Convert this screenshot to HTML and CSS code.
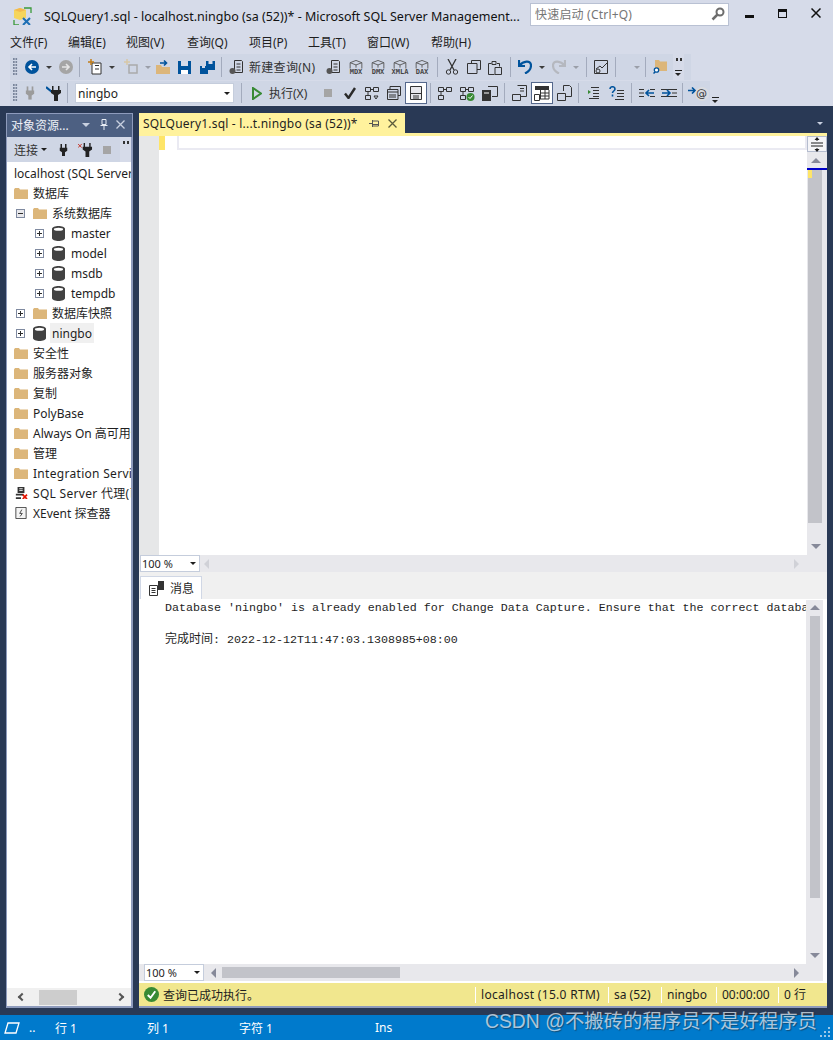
FILE: index.html
```html
<!DOCTYPE html>
<html lang="zh">
<head>
<meta charset="utf-8">
<title>SQLQuery1.sql - SSMS</title>
<link rel="stylesheet" href="styles.css">
</head>
<body>
<svg class="defs" width="0" height="0">
  <symbol id="folder" viewBox="0 0 14 12"><path d="M0 2.500 1 1h4l1 1.500h8V12H0z" fill="#dcb67a"/></symbol>
  <symbol id="db" viewBox="0 0 13 15"><path d="M0 3c0-4 13-4 13 0v9c0 4-13 4-13 0z" fill="#424242"/><ellipse cx="6.500" cy="3.200" rx="4.600" ry="1.500" fill="#fff"/></symbol>
  <symbol id="plus" viewBox="0 0 9 9"><rect x=".5" y=".5" width="8" height="8" fill="#fff" stroke="#7f8aa0"/><path d="M2 4.500h5M4.500 2v5" stroke="#2c2c2c"/></symbol>
  <symbol id="minus" viewBox="0 0 9 9"><rect x=".5" y=".5" width="8" height="8" fill="#e8e8ec" stroke="#7f8aa0"/><path d="M2 4.500h5" stroke="#2c2c2c"/></symbol>
  <symbol id="doc" viewBox="0 0 16 16"><path d="M5.500 1.500h7l1 1v11h-8zM7.500 5h4M7.500 8h4M7.500 11h4" fill="none" stroke="#333"/><ellipse cx="3.500" cy="12" rx="3" ry="3" fill="#555"/></symbol>
  <symbol id="cube" viewBox="0 0 18 10"><path d="M9 .5 15.500 3v6.500M9 .5 2.500 3v6.500M2.500 3 9 5.500 15.500 3M9 5.500v3" fill="none" stroke="#555"/></symbol>
  <symbol id="grid" viewBox="0 0 16 16"><path d="M1.500 2.500h5v4h-5zM9.500 2.500h5v4h-5zM1.500 10.500h5v4h-5zM4 6.500v4M6.500 4.500h3" fill="none" stroke="#333"/></symbol>
  <symbol id="plug" viewBox="0 0 12 16"><path d="M2 0h2v5H2zM8 0h2v5H8zM1 5h10v4l-3 2v5H4v-5L1 9z" fill="currentColor"/></symbol>
</svg>

<div class="app">
  <header class="titlebar">
    <svg class="logo" viewBox="0 0 22 22" width="22" height="22">
      <path d="M2 7l6-2 6 2v8l-6 2-6-2z" fill="#f6d55c"/><path d="M2 7l6-2 6 2-6 2z" fill="#f3b94d"/>
      <path d="M2 17v5h5M12 5h7v5" fill="none" stroke="#3a9a3a" stroke-width="1.300"/>
      <path d="M11 15l7 7M18 15l-7 7" stroke="#1e6fb5" stroke-width="2"/>
    </svg>
    <div class="title">SQLQuery1.sql - localhost.ningbo (sa (52))* - Microsoft SQL Server Management...</div>
    <div class="search">
      <span>快速启动 (Ctrl+Q)</span>
      <svg viewBox="0 0 14 14" width="14" height="14"><circle cx="9" cy="5" r="3.500" fill="none" stroke="#6d6d6d" stroke-width="2"/><path d="M6.500 7.500 1.500 12.500" stroke="#6d6d6d" stroke-width="2.500"/></svg>
    </div>
    <div class="winbtns">
      <i class="w-min"></i><i class="w-max"></i>
      <svg viewBox="0 0 10 10" width="10" height="10"><path d="M.5.500l9 9M9.500.500l-9 9" stroke="#111" stroke-width="1.500"/></svg>
    </div>
  </header>

  <nav class="menu">
    <span>文件(F)</span><span>编辑(E)</span><span>视图(V)</span><span>查询(Q)</span><span>项目(P)</span><span>工具(T)</span><span>窗口(W)</span><span>帮助(H)</span>
  </nav>

  <div class="toolbar tb1">
    <i class="grip"></i>
    <b class="tbi w20 first"><svg viewBox="0 0 14 14" width="14" height="14"><circle cx="7" cy="7" r="7" fill="#00539c"/><path d="M11 7H4M7 4 4 7l3 3" fill="none" stroke="#fff" stroke-width="1.600"/></svg></b>
    <i class="arr"></i>
    <b class="tbi w20 off"><svg viewBox="0 0 14 14" width="14" height="14"><circle cx="7" cy="7" r="7" fill="#a5a5a5"/><path d="M3 7h7M7 4l3 3-3 3" fill="none" stroke="#e5e5e5" stroke-width="1.600"/></svg></b>
    <i class="sep r5"></i>
    <b class="tbi w20"><svg viewBox="0 0 16 16" width="16" height="16"><path d="M5 4h9v11H5z" fill="#fff" stroke="#333"/><path d="M8 6.500h4M8 10h4" stroke="#333"/><path d="M4 0v6M1 3h6" stroke="#c27d1a" stroke-width="1.500"/></svg></b>
    <i class="arr mr6"></i>
    <b class="tbi w20 off"><svg viewBox="0 0 16 16" width="16" height="16"><path d="M6 6h8v8H6z" fill="none" stroke="#aaa" stroke-width="1.500"/><path d="M4 0v6M1 3h6" stroke="#d8c7a6" stroke-width="1.500"/></svg></b>
    <i class="arr off mr2"></i>
    <b class="tbi w20"><svg viewBox="0 0 16 16" width="16" height="16"><path d="M1 6h5l1 2h8v7H1z" fill="#dcb67a"/><path d="M5 4h6M9 1.500 11.500 4 9 6.500" fill="none" stroke="#00539c" stroke-width="1.600"/></svg></b>
    <b class="tbi w22"><svg viewBox="0 0 13 13" width="13" height="13"><path d="M0 0h13v13H0z" fill="#00539c"/><path d="M3 0h7v5H3z" fill="#d6dbe9"/><path d="M3 9h7v4H3z" fill="#fff"/></svg></b>
    <b class="tbi w22 ml1"><svg viewBox="0 0 15 13" width="15" height="13"><path d="M0 5h8v8H0zM6 0h9v9H6z" fill="#00539c"/><path d="M8.500 0h4v3h-4zM2 5h3v2H2z" fill="#d6dbe9"/></svg></b>
    <i class="sep r5"></i>
    <b class="tbi w20"><svg width="16" height="16"><use href="#doc"/></svg></b>
    <span class="tbtext nq">新建查询(N)</span>
    <b class="tbi w22"><svg width="16" height="16"><use href="#doc"/></svg></b>
    <b class="tbi w22 cube"><svg width="18" height="10"><use href="#cube"/></svg><em>MDX</em></b>
    <b class="tbi w22 cube"><svg width="18" height="10"><use href="#cube"/></svg><em>DMX</em></b>
    <b class="tbi w22 cube"><svg width="18" height="10"><use href="#cube"/></svg><em>XMLA</em></b>
    <b class="tbi w22 cube"><svg width="18" height="10"><use href="#cube"/></svg><em>DAX</em></b>
    <i class="sep l4"></i>
    <b class="tbi w22"><svg viewBox="0 0 14 16" width="14" height="16"><path d="M3 0l6 11M11 0 5 11" stroke="#333" stroke-width="1.300"/><circle cx="3.500" cy="13" r="2.200" fill="none" stroke="#333"/><circle cx="10.500" cy="13" r="2.200" fill="none" stroke="#333"/></svg></b>
    <b class="tbi w21"><svg viewBox="0 0 14 14" width="14" height="14"><path d="M4.500 3V.5h9v9H10M.500 3.500h9.500v10H.500z" fill="none" stroke="#333"/></svg></b>
    <b class="tbi w21"><svg viewBox="0 0 14 15" width="14" height="15"><path d="M.500 3.500h3M9 3.500h2.500v3M.500 3.500v11h6M7 7.500h6.500v7H7z" fill="none" stroke="#333"/><path d="M4 1.500h4v3H4z" fill="none" stroke="#333"/></svg></b>
    <i class="sep l5 r4"></i>
    <b class="tbi w20"><svg viewBox="0 0 14 14" width="14" height="14"><path d="M1 0v6h6M1.500 5.500C5 1 13-.5 13 5.500c0 3-2 6-6 8" fill="none" stroke="#00539c" stroke-width="2.200"/></svg></b>
    <i class="arr"></i>
    <b class="tbi w20"><svg viewBox="0 0 14 14" width="14" height="14"><path d="M13 0v6H7M12.500 5.500C9 1 1-.5 1 5.500c0 3 2 6 6 8" fill="none" stroke="#b5b8bf" stroke-width="2.200"/></svg></b>
    <i class="arr off"></i>
    <i class="sep"></i>
    <b class="tbi w22"><svg viewBox="0 0 14 14" width="14" height="14"><path d="M.500.500h13v13H.500zM2 9l4-3 2 2 5-5" fill="none" stroke="#333"/><circle cx="4" cy="11" r="2" fill="none" stroke="#333"/></svg></b>
    <i class="sep"></i>
    <i class="arr off spaced"></i>
    <i class="sep"></i>
    <b class="tbi w22"><svg viewBox="0 0 14 14" width="14" height="14"><path d="M2 0h4l1 1.500h7V11H2z" fill="#dcb67a"/><circle cx="3.500" cy="10" r="2.200" fill="#fff" stroke="#00539c" stroke-width="1.300"/><path d="M2 12 .5 13.500" stroke="#00539c" stroke-width="1.500"/></svg></b>
    <span class="overflow"><i class="dots"></i><i class="ovarr"></i></span>
  </div>

  <div class="toolbar tb2">
    <i class="grip"></i>
    <b class="tbi w18 plugoff"><svg width="10" height="14" viewBox="0 0 12 16"><use href="#plug"/></svg></b>
    <b class="tbi w24 ml3 plugon"><svg viewBox="0 0 16 15" width="16" height="15"><path d="M0 1l6 5" stroke="#00539c" stroke-width="2.200"/><path d="M6 0h1.500v4H6zM12 0h1.500v4H12zM5 4h10v3l-3 2v6H8V9L5 7z" fill="#222"/></svg></b>
    <i class="sep l1 r7"></i>
    <div class="combo"><span>ningbo</span><i class="arr dark"></i></div>
    <i class="sep l7 r5"></i>
    <b class="tbi w20"><svg viewBox="0 0 10 13" width="10" height="13"><path d="M1 1l8 5.500-8 5.500z" fill="none" stroke="#388a34" stroke-width="2"/></svg></b>
    <span class="tbtext run">执行(X)</span>
    <b class="tbi w22"><i class="stop"></i></b>
    <b class="tbi w22"><svg viewBox="0 0 12 12" width="12" height="12"><path d="M1 6.500 4.500 11 11 1" fill="none" stroke="#2a2a2a" stroke-width="2.400"/></svg></b>
    <b class="tbi w22"><svg viewBox="0 0 16 16" width="16" height="16"><use href="#grid"/><path d="M10 11h4l-2 3z" fill="none" stroke="#333"/></svg></b>
    <b class="tbi w21"><svg viewBox="0 0 14 14" width="14" height="14"><path d="M3 3V.5h10.500v9H11M.500 3.500h10.500v10H.500zM.500 6h10.500M2 9h7M2 11h7" fill="none" stroke="#333"/></svg></b>
    <b class="tbi w22 ml1 boxed"><svg viewBox="0 0 12 14" width="12" height="14"><path d="M.500.500h11v13H.500zM.500 7.500h11M3 10h6M3 12h6" fill="#e8e8ec" stroke="#333"/></svg></b>
    <i class="sep"></i>
    <b class="tbi w22"><svg width="16" height="16"><use href="#grid"/></svg></b>
    <b class="tbi w22"><svg width="16" height="16" viewBox="0 0 16 16"><use href="#grid"/><circle cx="11.500" cy="12" r="4" fill="#388a34"/><path d="M9.500 12l1.500 1.500 2.500-3" fill="none" stroke="#fff"/></svg></b>
    <b class="tbi w24"><svg viewBox="0 0 16 15" width="16" height="15"><path d="M0 4h9v11H0z" fill="#333"/><path d="M6 .5h9.500v10H10" fill="none" stroke="#333"/><path d="M2 7h5" stroke="#fff"/></svg></b>
    <i class="sep l2 r4"></i>
    <b class="tbi w22"><svg viewBox="0 0 16 16" width="16" height="16"><path d="M5.500.500h9v11H9M8 3.500h4M8 6h4" fill="none" stroke="#333"/><path d="M.500 9.500h8v6h-8z" fill="none" stroke="#333"/></svg></b>
    <b class="tbi w22 boxed"><svg viewBox="0 0 16 16" width="16" height="16"><path d="M1 1h14v4H1z" fill="#333"/><path d="M6.500 5v9M11 5v9M6.500 8H15M6.500 11H15M15 5v9H6" fill="none" stroke="#333"/><path d="M.500 9.500h5v6h-5z" fill="#fff" stroke="#333"/></svg></b>
    <b class="tbi w22 ml1"><svg viewBox="0 0 16 16" width="16" height="16"><path d="M6.500 6V.5h6l2 2v9H9" fill="none" stroke="#333"/><path d="M.500 8.500h8v7h-8z" fill="none" stroke="#333"/></svg></b>
    <i class="sep l2 r4"></i>
    <b class="tbi w22"><svg viewBox="0 0 12 12" width="12" height="12"><path d="M3 .5h8M5 3.500h6M5 6.500h6M5 9.500h6M1 11.500h10" stroke="#333"/><path d="M0 3l3 2-3 2z" fill="#388a34"/></svg></b>
    <b class="tbi w22"><svg viewBox="0 0 15 14" width="15" height="14"><path d="M1 3c0-3 5-3 5 0 0 2-2.500 2-2.500 4M3.500 8.500v2" fill="none" stroke="#00539c" stroke-width="1.600"/><path d="M8 4.500h7M8 7.500h7M8 10.500h7M6 13.500h9" stroke="#333"/></svg></b>
    <i class="sep l4 r4"></i>
    <b class="tbi w22"><svg viewBox="0 0 16 12" width="16" height="12"><path d="M0 2.500h5M0 6h5M0 9.500h5M11 2.500h5M11 9.500h5" stroke="#333"/><path d="M15 6H7M10 3 7 6l3 3" fill="none" stroke="#00539c" stroke-width="1.600"/></svg></b>
    <b class="tbi w22"><svg viewBox="0 0 16 12" width="16" height="12"><path d="M0 2.500h16M0 9.500h16M11 6h5" stroke="#333"/><path d="M1 6h8M6 3l3 3-3 3" fill="none" stroke="#00539c" stroke-width="1.600"/></svg></b>
    <i class="sep l2 r4"></i>
    <b class="tbi w22 mailic"><svg viewBox="0 0 8 7" width="8" height="7"><path d="M0 3.500h7M4 .5l3 3-3 3" fill="none" stroke="#00539c" stroke-width="1.600"/></svg><em>@</em></b>
    <span class="tb2end"><i class="ovarr"></i></span>
  </div>

  <div class="workspace">
    <aside class="explorer">
      <div class="exp-head">
        <span class="exp-title">对象资源...</span>
        <i class="arr light"></i>
        <svg viewBox="0 0 8 11" width="8" height="11"><path d="M2 .5h4v5H2zM.5 6.500h7M4 7v4" fill="none" stroke="#e8ecf4"/></svg>
        <svg viewBox="0 0 9 9" width="9" height="9"><path d="M.5.500l8 8M8.500.500l-8 8" stroke="#c8d0e0" stroke-width="1.300"/></svg>
      </div>
      <div class="exp-tools">
        <span class="conn">连接</span><i class="arr dark"></i>
        <svg class="p1" width="9" height="14" viewBox="0 0 12 16"><use href="#plug"/></svg>
        <svg class="p2" width="15" height="14" viewBox="0 0 16 15"><path d="M0 1l4 4M4 1 0 5" stroke="#c42b1c"/><path d="M6 0h1.500v4H6zM12 0h1.500v4H12zM5 4h10v3l-3 2v6H8V9L5 7z" fill="#222"/></svg>
        <i class="stop"></i>
        <span class="exp-over"><i class="dots"></i></span>
      </div>
      <div class="tree">
        <div class="node"><span>localhost (SQL Server 15.0.2000 - sa)</span></div>
        <div class="node lv0"><svg class="ic"><use href="#folder"/></svg><span>数据库</span></div>
        <div class="node lv1"><svg class="ex"><use href="#minus"/></svg><svg class="ic"><use href="#folder"/></svg><span>系统数据库</span></div>
        <div class="node lv2"><svg class="ex"><use href="#plus"/></svg><svg class="ic dbi"><use href="#db"/></svg><span>master</span></div>
        <div class="node lv2"><svg class="ex"><use href="#plus"/></svg><svg class="ic dbi"><use href="#db"/></svg><span>model</span></div>
        <div class="node lv2"><svg class="ex"><use href="#plus"/></svg><svg class="ic dbi"><use href="#db"/></svg><span>msdb</span></div>
        <div class="node lv2"><svg class="ex"><use href="#plus"/></svg><svg class="ic dbi"><use href="#db"/></svg><span>tempdb</span></div>
        <div class="node lv1"><svg class="ex"><use href="#plus"/></svg><svg class="ic"><use href="#folder"/></svg><span>数据库快照</span></div>
        <div class="node lv1"><svg class="ex"><use href="#plus"/></svg><svg class="ic dbi"><use href="#db"/></svg><span class="sel">ningbo</span></div>
        <div class="node lv0"><svg class="ic"><use href="#folder"/></svg><span>安全性</span></div>
        <div class="node lv0"><svg class="ic"><use href="#folder"/></svg><span>服务器对象</span></div>
        <div class="node lv0"><svg class="ic"><use href="#folder"/></svg><span>复制</span></div>
        <div class="node lv0"><svg class="ic"><use href="#folder"/></svg><span>PolyBase</span></div>
        <div class="node lv0"><svg class="ic"><use href="#folder"/></svg><span>Always On 高可用性</span></div>
        <div class="node lv0"><svg class="ic"><use href="#folder"/></svg><span>管理</span></div>
        <div class="node lv0 wide"><svg class="ic"><use href="#folder"/></svg><span>Integration Services 目录</span></div>
        <div class="node lv0 wide"><svg class="ic" viewBox="0 0 14 14"><path d="M3 0h8v7H3zM1 8h9v2H1zM1 12h6v2H1z" fill="#333"/><path d="M5 2h4M5 4h4" stroke="#fff"/><path d="M9 9l5 5M14 9l-5 5" stroke="#e51400" stroke-width="2"/></svg><span>SQL Server 代理(已禁用代理 XP)</span></div>
        <div class="node lv0"><svg class="ic" viewBox="0 0 13 14"><path d="M.500.500h12v13H.500z" fill="#f4f4f4" stroke="#333"/><path d="M7.500 3 5 7.500h3L5.500 11" fill="none" stroke="#333"/></svg><span>XEvent 探查器</span></div>
      </div>
      <div class="exp-scroll">
        <i class="chev l"></i><i class="thumb"></i><i class="chev r"></i>
      </div>
    </aside>

    <main class="doc">
      <div class="tabstrip">
        <div class="tab">
          <span>SQLQuery1.sql - l...t.ningbo (sa (52))*</span>
          <svg viewBox="0 0 11 9" width="11" height="9"><path d="M0 4.500h3M3.500 1v7M3.500 2h6v5h-6M3.500 5.500h6" fill="none" stroke="#555"/></svg>
          <svg viewBox="0 0 9 9" width="9" height="9"><path d="M.5.500l8 8M8.500.500l-8 8" stroke="#5c5c3c" stroke-width="1.300"/></svg>
        </div>
        <i class="arr light tabmenu"></i>
      </div>
      <div class="tabline"></div>
      <div class="docbody">
        <section class="editor">
          <div class="edit-main">
            <div class="margin"></div>
            <div class="modbar"><i></i></div>
            <div class="edit-area"><div class="curline"></div></div>
            <div class="vscroll">
              <div class="split"><svg viewBox="0 0 12 15" width="12" height="15"><path d="M0 6h12M0 9h12" stroke="#1e1e1e" stroke-width="1.200"/><path d="M6 0 3.500 3h5zM6 15l-2.500-3h5z" fill="#1e1e1e"/><path d="M6 2v2M6 11v2" stroke="#1e1e1e"/></svg></div>
              <i class="up"></i>
              <div class="vtrack"><i class="mark"></i></div>
              <i class="down"></i>
            </div>
          </div>
          <div class="hbar">
            <div class="zoom"><span>100 %</span><i class="arr dark"></i></div>
            <i class="hl off2"></i>
            <span class="fill"></span>
            <i class="hr off2"></i>
          </div>
        </section>
        <div class="msgtabs">
          <div class="msgtab">
            <svg viewBox="0 0 16 15" width="16" height="15"><path d="M.500 4.500h8v10h-8zM2.500 7.500h4M2.500 9.500h4M2.500 11.500h4" fill="none" stroke="#333"/><path d="M9 0h6v9H9z" fill="#333"/></svg>
            <span>消息</span>
          </div>
        </div>
        <section class="results">
          <div class="msgs">
            <pre>Database 'ningbo' is already enabled for Change Data Capture. Ensure that the correct database context is set, and retry the operation.

<span class="cjk">完成时间</span>: 2022-12-12T11:47:03.1308985+08:00</pre>
          </div>
          <div class="vscroll2"><i class="up"></i><div class="vtrack2"></div><i class="down"></i></div>
        </section>
        <div class="hbar2">
          <div class="zoom"><span>100 %</span><i class="arr dark"></i></div>
          <i class="hl"></i>
          <span class="fill"><i class="hthumb"></i></span>
          <i class="hr"></i>
        </div>
        <div class="infobar">
          <svg viewBox="0 0 16 16" width="15" height="15"><circle cx="8" cy="8" r="8" fill="#388a34"/><path d="M4 8.500 7 11.500l5-7" fill="none" stroke="#fff" stroke-width="2"/></svg>
          <span class="okmsg">查询已成功执行。</span>
          <span class="cell c1">localhost (15.0 RTM)</span>
          <span class="cell c2">sa (52)</span>
          <span class="cell c3">ningbo</span>
          <span class="cell c4">00:00:00</span>
          <span class="cell c5">0 行</span>
        </div>
      </div>
    </main>
  </div>

  <footer class="status">
    <svg viewBox="0 0 16 12" width="16" height="12"><path d="M4 1h11l-3 10H1z" fill="none" stroke="#fff" stroke-width="1.300"/></svg>
    <span class="s0">..</span>
    <span class="s1">行 1</span>
    <span class="s2">列 1</span>
    <span class="s3">字符 1</span>
    <span class="s4">Ins</span>
  </footer>
  <div class="watermark">CSDN @不搬砖的程序员不是好程序员</div>
  <svg class="rgrip" viewBox="0 0 10 10" width="10" height="10"><path d="M8 0h2v2H8zM4 4h2v2H4zM8 4h2v2H8zM0 8h2v2H0zM4 8h2v2H4zM8 8h2v2H8z" fill="#9cc8e8"/></svg>
</div>
</body>
</html>
```
FILE: styles.css
```css
* { box-sizing: border-box; }
html, body { margin: 0; padding: 0; }
body {
  width: 833px; height: 1040px; overflow: hidden;
  font-family: "Noto Sans", "Noto Sans CJK SC", sans-serif;
  font-size: 12px; color: #1e1e1e; background: #d6dbe9;
}
.defs { display: block; position: absolute; }
i, b, em { font-style: normal; font-weight: normal; }
.app { position: relative; width: 833px; height: 1040px; display: flex; flex-direction: column; overflow: hidden; }

/* title */
.titlebar { height: 30px; flex: none; display: flex; align-items: center; padding-left: 12px; }
.logo { flex: none; margin-top: -2px; }
.title { margin-left: 10px; width: 486px; white-space: nowrap; font-size: 12.500px; color: #111; margin-top: 3px; }
.search {
  width: 199px; height: 23px; margin-top: -2px; background: #fff; border: 1px solid #b9c1d3;
  display: flex; align-items: center; justify-content: space-between; padding: 0 3px 0 4px;
  color: #767676; font-size: 12px; letter-spacing: .2px;
}
.winbtns { display: flex; align-items: center; margin-top: -4px; padding-left: 16px; gap: 24px; }
.w-min { width: 9px; height: 3px; background: #111; margin-top: 6px; }
.w-max { width: 9px; height: 9px; border: 1px solid #111; border-top-width: 3px; }

/* menu */
.menu { height: 24px; flex: none; display: grid; grid-template-columns: 58px 58px 61px 62px 59px 59px 64px 1fr; align-items: center; padding-left: 10px; font-size: 12px; color: #1e1e1e; }
.menu span { white-space: nowrap; }

/* toolbars */
.toolbar { flex: none; display: flex; align-items: center; background: #cfd6e5; margin-left: 10px; }
.tb1 { height: 26px; width: 681px; }
.tb2 { height: 24px; width: 710px; margin-top: 1px; }
.grip { width: 5px; height: 18px; margin: 0 3px; flex: none;
  background-image: radial-gradient(circle at 1px 1px, #7a869c 0.800px, transparent 1px); background-size: 2.500px 3px; }
.tbi { flex: none; height: 22px; display: flex; align-items: center; justify-content: center; position: relative; }
.tbi.w18 { width: 18px; } .tbi.w20 { width: 20px; } .tbi.w21 { width: 21px; } .tbi.w22 { width: 22px; } .tbi.w24 { width: 24px; }
.tbi.first { margin-left: 1px; }
.tbi.ml1 { margin-left: 1px; }
.tbi.ml3 { margin-left: 3px; }
.sep { flex: none; width: 1px; height: 20px; background: #a3abbd; margin: 0 3px; }
.sep.r5 { margin-right: 5px; } .sep.r4 { margin-right: 4px; } .sep.r7 { margin-right: 7px; }
.sep.l1 { margin-left: 1px; } .sep.l2 { margin-left: 2px; } .sep.l4 { margin-left: 4px; } .sep.l5 { margin-left: 5px; } .sep.l7 { margin-left: 7px; }
.arr { flex: none; display: block; width: 0; height: 0; border: 3.500px solid transparent; border-top: 3.500px solid #3c3c3c; border-bottom: 0; margin: 0 4px; }
.arr.mr6 { margin-right: 6px; }
.arr.mr2 { margin-right: 2px; }
.arr.off { border-top-color: #9a9ea8; }
.arr.dark { border-top-color: #1e1e1e; margin: 0 3px; }
.arr.light { border-top-color: #c8d0e0; }
.arr.spaced { margin: 0 2px 0 15px; }
.tbtext { flex: none; white-space: nowrap; font-size: 12px; color: #333; }
.nq { margin: 0 8px 0 2px; width: 66px; letter-spacing: .3px; }
.run { margin: 0 8px 0 2px; width: 40px; }
.cube { flex-direction: column; padding-top: 2px; }
.cube svg { flex: none; height: 9px; }
.cube em { font-family: "DejaVu Sans Mono", monospace; font-size: 7px; font-weight: bold; line-height: 7px; color: #444; }
.mailic { gap: 0; }
.mailic svg { margin: -6px -1px 0 0; flex: none; }
.mailic em { font-family: "DejaVu Sans", sans-serif; font-size: 11px; line-height: 14px; width: 14px; height: 14px; text-align: center; border-radius: 50%; background: #d9dbe0; color: #333; margin-top: 2px; }
.overflow { margin-left: 2px; width: 11px; align-self: stretch; display: flex; flex-direction: column; align-items: center; justify-content: space-between; padding: 4px 0; background: #d6dbe9; }
.dots { display: block; width: 6px; height: 3px; background-image: linear-gradient(90deg, #333 2px, transparent 2px); background-size: 4px 3px; }
.ovarr { display: block; width: 7px; height: 6px; border-top: 1px solid #222; position: relative; }
.ovarr::after { content: ""; position: absolute; left: 0; top: 2px; border: 3.500px solid transparent; border-top-color: #222; border-bottom: 0; }
.plugoff { color: #9b9b9b; }
.combo { flex: none; width: 159px; height: 20px; background: #fff; border: 1px solid #c5cddc; display: flex; align-items: center; justify-content: space-between; padding: 0 0 0 2px; font-size: 12px; }
.stop { display: block; width: 8px; height: 8px; background: #a5a5a5; flex: none; }
.boxed { background: #fff; border: 1px solid #55688c; height: 22px; }
.tb2end { margin-left: 1px; height: 100%; display: flex; align-items: flex-end; padding-bottom: 2px; flex: 1; background: #d6dbe9; justify-content: center; align-self: stretch; }

/* workspace */
.workspace { flex: 1; min-height: 0; background: #293955; margin-top: 1px; display: flex; padding: 7px 6px 7px 6px; gap: 6px; }
.explorer { width: 127px; flex: none; display: flex; flex-direction: column; border: 2px solid #8e9bbc; border-width: 0 2px 2px 1px; background: #fff; }
.exp-head { height: 24px; flex: none; background: #4d6082; margin: 0 -2px 0 -1px; border: 1px solid #8e9bbc; border-bottom: 0; display: flex; align-items: center; padding: 0 7px 2px 4px; gap: 8px; color: #eef1f7; }
.exp-title { font-size: 12px; white-space: nowrap; flex: 1; }
.exp-head .arr { margin: 0 2px 0 0; border-width: 4px; border-bottom: 0; }
.exp-tools { height: 25px; flex: none; background: #cfd6e5; display: flex; align-items: center; padding-left: 7px; position: relative; }
.conn { font-size: 12px; color: #333; }
.exp-tools .arr { margin: 0 0 0 3px; }
.p1 { margin-left: 12px; flex: none; color: #222; }
.p2 { margin-left: 10px; flex: none; }
.exp-tools .stop { margin-left: 10px; }
.exp-over { margin-left: auto; width: 11px; align-self: stretch; background: #d6dbe9; padding-top: 4px; display: flex; justify-content: center; }
.tree { flex: 1; min-height: 0; overflow: hidden; padding-top: 1px; }
.node { height: 20px; display: flex; align-items: center; white-space: nowrap; overflow: hidden; padding-left: 7px; color: #1e1e1e; font-size: 12px; }
.node span { flex: none; }
.node.wide span { letter-spacing: .3px; }
.ic { width: 14px; height: 12px; flex: none; }
.dbi { width: 13px; height: 15px; }
.ex { width: 9px; height: 9px; flex: none; }
.lv0 .ic { margin-right: 5px; }
.lv1 { padding-left: 9px; }
.lv1 .ic { margin: 0 5px 0 8px; }
.lv1 .dbi { margin-right: 6px; }
.lv2 { padding-left: 28px; }
.lv2 .ic { margin: 0 6px 0 8px; }
.sel { background: #f0f0f0; padding: 0 2px; margin-left: -2px; height: 20px; display: flex; align-items: center; }
.exp-scroll { height: 18px; flex: none; background: #f0f0f0; display: flex; align-items: center; padding: 0 2px; }
.chev { flex: none; display: block; width: 6px; height: 6px; border: solid #555; border-width: 0 0 2px 2px; transform: rotate(45deg); margin: 0 5px 0 10px; }
.chev.r { transform: rotate(225deg); margin: 0 6px 0 auto; }
.thumb { flex: none; width: 38px; height: 15px; background: #cdcdcd; margin-left: 9px; }

/* document */
.doc { flex: 1; min-width: 0; display: flex; flex-direction: column; }
.tabstrip { height: 20px; flex: none; display: flex; align-items: stretch; position: relative; }
.tab { width: 266px; background: #fff29d; display: flex; align-items: center; padding-left: 4px; color: #1e1e1e; font-size: 12px; white-space: nowrap; }
.tab span { width: 226px; flex: none; letter-spacing: .2px; }
.tab svg:last-child { margin-left: 8px; }
.tabmenu { margin: 9px 4px 0 auto; }
.tabline { height: 3px; flex: none; background: #fff29d; }
.docbody { flex: 1; min-height: 0; background: #fff; display: flex; flex-direction: column; }
.editor { height: 436px; flex: none; display: flex; flex-direction: column; }
.edit-main { flex: 1; min-height: 0; display: flex; }
.margin { width: 20px; flex: none; background: #e6e7e8; }
.modbar { width: 18px; flex: none; }
.modbar i { display: block; width: 6px; height: 14px; background: #fee568; }
.edit-area { flex: 1; min-width: 0; }
.curline { height: 14px; border: 2px solid #eaeaf2; border-top: 0; }
.vscroll { width: 20px; flex: none; background: #e8e8ec; display: flex; flex-direction: column; align-items: center; }
.split { width: 20px; height: 16px; flex: none; background: #f5f5f8; border: 1px solid #b5bdcf; display: flex; align-items: center; justify-content: center; }
.up, .down { flex: none; display: block; width: 0; height: 0; border: 5px solid transparent; }
.up { border-bottom: 5px solid #868999; border-top: 0; margin: 6px 0 5px; }
.down { border-top: 5px solid #868999; border-bottom: 0; margin: 6px 0 6px; }
.vscroll .up, .vscroll .down { margin-left: -3px; }
.vtrack { flex: 1; width: 20px; background: linear-gradient(#c2c3c9 353px, transparent 353px) no-repeat 1px 0 / 14px 100%; border-top: 2px solid #0000c8; position: relative; }
.mark { position: absolute; left: 1px; top: 0; width: 4px; height: 8px; background: #fee568; }
.hbar, .hbar2 { height: 17px; flex: none; background: #e8e8ec; display: flex; align-items: center; }
.zoom { flex: none; width: 60px; height: 17px; background: #fff; border: 1px solid #c5cddc; display: flex; align-items: center; justify-content: space-between; padding-left: 1px; font-size: 11px; color: #1e1e1e; }
.hbar .zoom { margin-left: 1px; }
.hl, .hr { flex: none; display: block; width: 0; height: 0; border: 5px solid transparent; margin: 0 4px; }
.hl { border-right: 5px solid #868999; border-left: 0; }
.hr { border-left: 5px solid #868999; border-right: 0; margin-right: 28px; }
.hl.off2 { border-right-color: #d0d1d7; }
.hr.off2 { border-left-color: #d0d1d7; }
.fill { flex: 1; min-width: 0; display: flex; align-items: center; }
.msgtabs { height: 27px; flex: none; background: #f0f0f0; padding: 4px 0 0 1px; }
.msgtab { width: 62px; height: 23px; background: #fff; border: 1px solid #d0d7e5; border-bottom: 0; display: flex; align-items: center; padding-left: 8px; gap: 5px; font-size: 12px; }
.results { flex: 1; min-height: 0; display: flex; }
.msgs { flex: 1; min-width: 0; overflow: hidden; padding: 1px 0 0 26px; }
.msgs pre { margin: 0; font-family: "Liberation Mono", "Noto Sans CJK SC", monospace; font-size: 11.670px; line-height: 16px; color: #1e1e1e; white-space: pre; }
.cjk { font-size: 12px; }
.vscroll2 { width: 17px; flex: none; margin: 1px 4px 0 0; background: #e8e8ec; display: flex; flex-direction: column; align-items: center; }
.vscroll2 .up { margin: 5px 0 6px; }
.vtrack2 { flex: 1; width: 10px; background: #c2c3c9; margin-bottom: 49px; }
.hbar2 { margin: 0 4px 2px 0; }
.hbar2 .zoom { margin-left: 5px; }
.hthumb { display: block; width: 178px; height: 11px; background: #c2c3c9; margin-left: 2px; }
.hbar2 .hl { margin: 0 4px 0 7px; }
.hbar2 .hr { margin-right: 24px; }
.infobar { height: 25px; flex: none; background: #f1e78e; display: flex; align-items: center; padding-left: 5px; font-size: 12px; color: #1e1e1e; border-bottom: 2px solid #8e9bbc; }
.okmsg { margin-left: 4px; width: 312px; flex: none; }
.cell { flex: none; border-left: 1px solid #fff; padding-left: 5px; height: 16px; line-height: 16px; white-space: nowrap; }
.c1 { width: 133px; letter-spacing: .3px; } .c2 { width: 53px; } .c3 { width: 55px; } .c4 { width: 62px; } .c5 { width: 40px; }

/* status */
.status { height: 25px; flex: none; background: #007acc; color: #fff; display: flex; align-items: center; padding-left: 4px; font-size: 12px; }
.s0 { margin-left: 9px; width: 26px; }
.s1 { width: 92px; } .s2 { width: 92px; } .s3 { width: 136px; }
.watermark { position: absolute; right: 16px; bottom: 7px; font-family: "Liberation Sans", "Noto Sans CJK SC", sans-serif; font-size: 19.400px; line-height: 24px; color: rgba(225,232,240,.75); text-shadow: 1px 1px 1px rgba(30,40,50,.55); white-space: nowrap; }
.rgrip { position: absolute; right: 3px; bottom: 3px; }
```
